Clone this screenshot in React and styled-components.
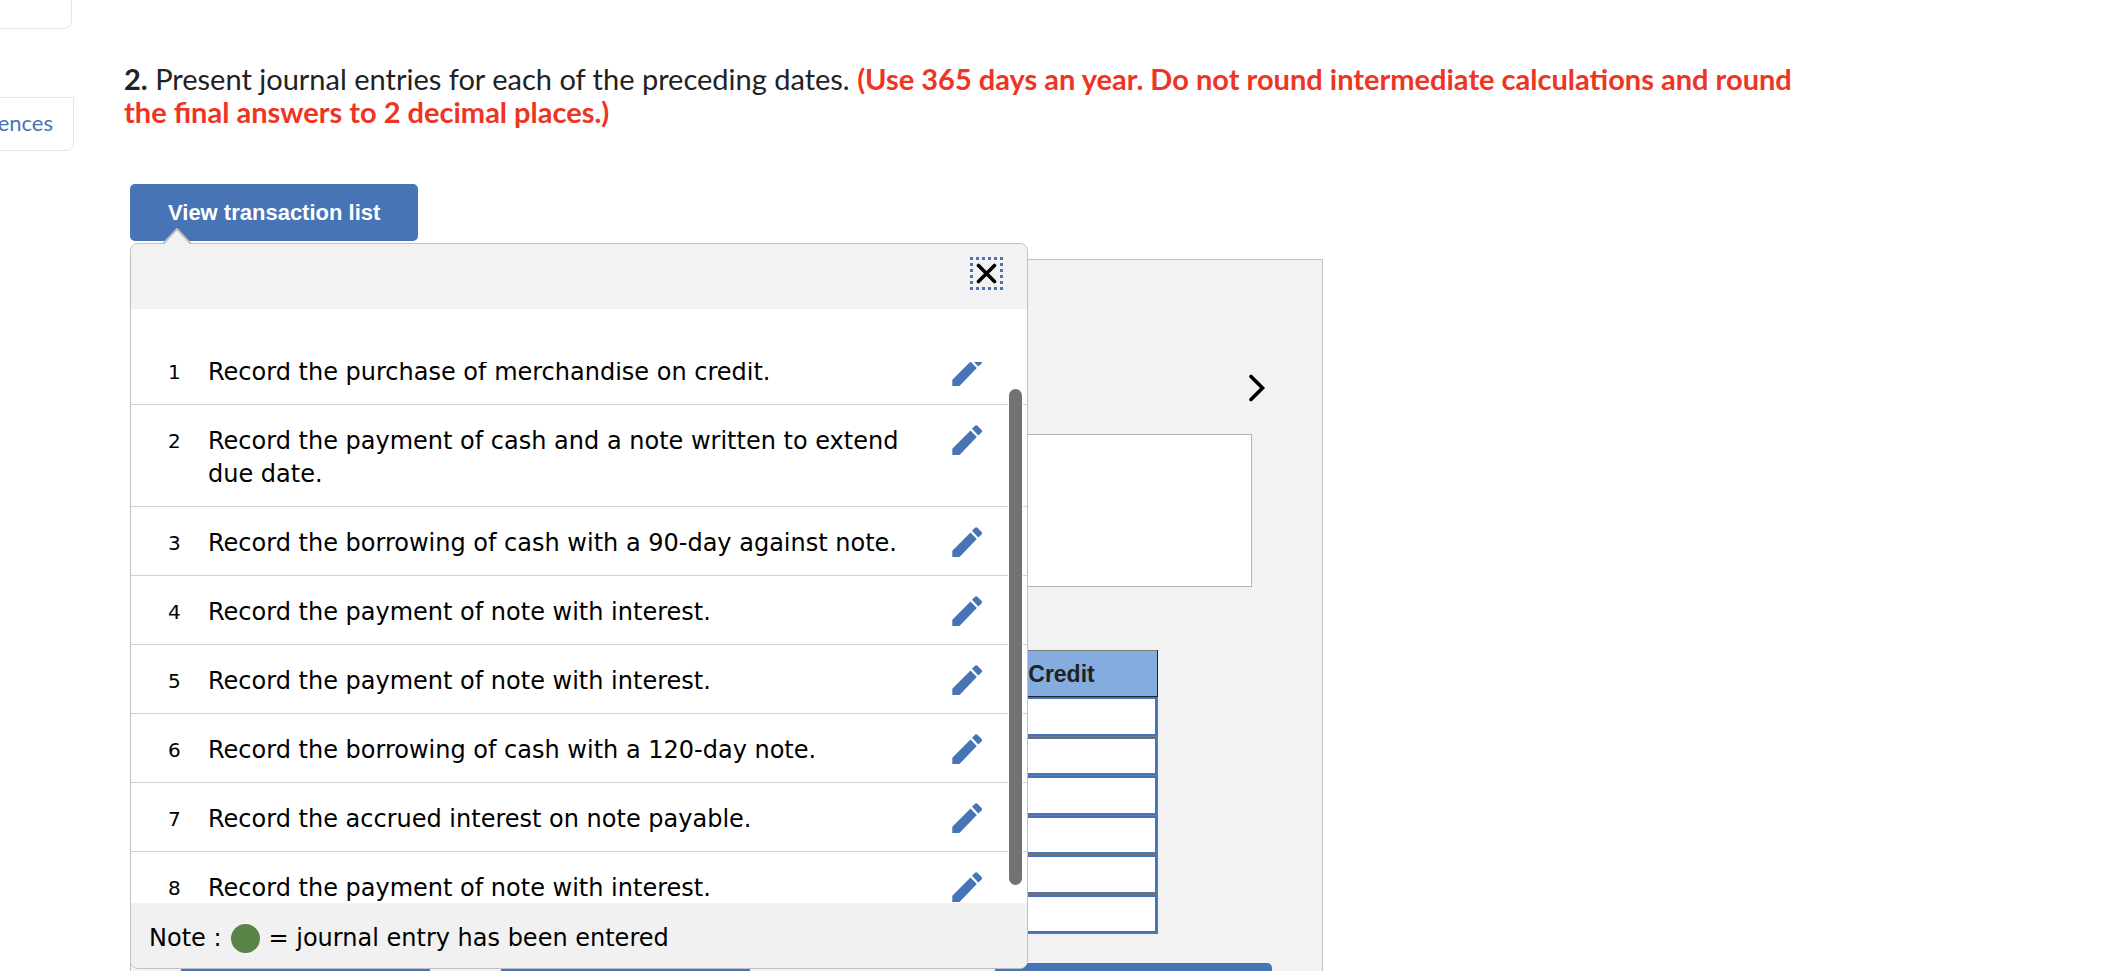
import { useLayoutEffect, useRef } from "react";
import styled, { createGlobalStyle } from "styled-components";

const transactions = [
  "Record the purchase of merchandise on credit.",
  "Record the payment of cash and a note written to extend due date.",
  "Record the borrowing of cash with a 90-day against note.",
  "Record the payment of note with interest.",
  "Record the payment of note with interest.",
  "Record the borrowing of cash with a 120-day note.",
  "Record the accrued interest on note payable.",
  "Record the payment of note with interest.",
];

const creditRows = [1, 2, 3, 4, 5, 6];

function Pencil() {
  return (
    <svg width="30" height="30" viewBox="0 0 30 30" aria-hidden="true">
      <path
        fill="#4674b5"
        d="M.3 30V23.7L18.5 5.6l6.3 6.5L7.5 30ZM20 3.8l3-3q1.2-1 2.4 0l4.2 4.2q1 1.2 0 2.4l-3.3 3.2Z"
      />
    </svg>
  );
}

function TransactionList() {
  const listRef = useRef(null);

  useLayoutEffect(() => {
    listRef.current.scrollTop = 26;
  }, []);

  return (
    <Popup>
      <Pointer width="30" height="16" viewBox="0 0 30 16" aria-hidden="true">
        <path d="M1 16 15 1l14 15" fill="#f2f2f2" stroke="#c0c0c0" strokeWidth="2" />
      </Pointer>
      <PopupHeader>
        <CloseButton type="button" aria-label="Close">
          <svg width="21" height="21" viewBox="0 0 21 21" aria-hidden="true">
            <path d="M2.5 2.5l16 16M18.5 2.5l-16 16" stroke="#000" strokeWidth="3.6" strokeLinecap="round" />
          </svg>
        </CloseButton>
      </PopupHeader>
      <ScrollArea>
        <List ref={listRef}>
          {transactions.map((text, i) => (
            <Item key={i}>
              <Number>{i + 1}</Number>
              <Description>{text}</Description>
              <EditButton type="button" aria-label={`Edit entry ${i + 1}`}>
                <Pencil />
              </EditButton>
            </Item>
          ))}
        </List>
        <Thumb />
      </ScrollArea>
      <Note>
        <span>Note :</span>
        <Dot />
        <span>= journal entry has been entered</span>
      </Note>
    </Popup>
  );
}

function App() {
  return (
    <>
      <GlobalStyle />
      <Page>
        <Sidebar>
          <SideCard />
          <SideLink href="#">ences</SideLink>
        </Sidebar>
        <Main>
          <Question>
            <b>2.</b> Present journal entries for each of the preceding dates.{" "}
            <Hint>
              (Use 365 days an year. Do not round intermediate calculations and round the final
              answers to 2 decimal places.)
            </Hint>
          </Question>
          <Workspace>
            <ViewButton type="button">View transaction list</ViewButton>
            <TransactionList />
            <Panel>
              <NextButton type="button" aria-label="Next entry">
                <svg width="18" height="28" viewBox="0 0 18 28" aria-hidden="true">
                  <path d="M3 2.5 14.5 14 3 25.5" fill="none" stroke="#000" strokeWidth="3.6" strokeLinecap="round" />
                </svg>
              </NextButton>
              <Prompt />
              <Journal>
                <thead>
                  <tr>
                    <th scope="col">Credit</th>
                  </tr>
                </thead>
                <tbody>
                  {creditRows.map((row) => (
                    <tr key={row}>
                      <td>
                        <CreditInput aria-label={`Credit ${row}`} />
                      </td>
                    </tr>
                  ))}
                </tbody>
              </Journal>
              <Actions>
                <Action type="button" aria-label="Record entry" />
                <Action type="button" aria-label="Clear entry" />
                <Action type="button" aria-label="View general journal" $wide />
              </Actions>
            </Panel>
          </Workspace>
        </Main>
      </Page>
    </>
  );
}

const GlobalStyle = createGlobalStyle`
  * {
    box-sizing: border-box;
  }
  body {
    margin: 0;
    background-color: #fff;
    overflow: hidden;
  }
  button {
    padding: 0;
    border: 0;
    background: none;
    cursor: pointer;
  }
  svg {
    display: block;
  }
`;

const Page = styled.div`
  display: flex;
  height: calc(100vh - 9px);
  overflow: hidden;
`;
const Sidebar = styled.aside`
  display: flex;
  flex-direction: column;
  align-items: flex-start;
  gap: 68px;
  width: 124px;
  flex-shrink: 0;
`;
const SideCard = styled.div`
  width: 72px;
  height: 29px;
  border: solid #e6e6e6;
  border-width: 0 1px 1px 0;
  border-bottom-right-radius: 8px;
`;
const SideLink = styled.a`
  display: flex;
  justify-content: flex-end;
  width: 74px;
  padding: 11px 20px 13px 0;
  border: solid #e6e6e6;
  border-width: 1px 1px 1px 0;
  border-bottom-right-radius: 8px;
  color: #4674b5;
  font: 22px/28px Lato, sans-serif;
  text-decoration: none;
`;
const Main = styled.main`
  flex: 1;
  padding-top: 62px;
`;
const Question = styled.p`
  max-width: 1710px;
  margin: 0;
  color: #222;
  font: 29px/33px Lato, sans-serif;
`;
const Hint = styled.strong`
  color: #ee3524;
`;
const Workspace = styled.section`
  position: relative;
  max-width: 1199px;
  padding: 56px 0 0 6px;
`;
const ViewButton = styled.button`
  display: block;
  padding: 0 38px;
  height: 57px;
  border-radius: 5px;
  background-color: #4674b5;
  color: #fff;
  font: bold 22px/57px "Liberation Sans", Arial, sans-serif;
`;
const Panel = styled.div`
  display: flex;
  flex-direction: column;
  align-items: flex-end;
  margin-top: 18px;
  border: 1px solid #c0c0c0;
  background-color: #f2f2f2;
`;
const NextButton = styled.button`
  margin: 114px 56px 0 0;
`;
const Prompt = styled.div`
  width: 90%;
  height: 153px;
  margin: 32px 70px 0 0;
  border: 1px solid #b4b4b4;
  background-color: #fff;
`;
const Journal = styled.table`
  width: 193px;
  margin: 63px 164px 0 0;
  border-collapse: collapse;

  th {
    height: 46px;
    padding: 0;
    border: 1px solid #222;
    border-top-color: #777;
    background-color: #84acdf;
    color: #222;
    font: bold 23px/44px "Liberation Sans", Arial, sans-serif;
  }
  td {
    padding: 0;
    border: 1px solid #777;
  }
  tr:nth-child(even) input {
    height: 38px;
  }
`;
const CreditInput = styled.input`
  display: block;
  width: 100%;
  height: 39px;
  padding: 0 8px;
  border: 2px solid #4674b5;
  border-radius: 0;
  background-color: #fff;
`;
const Actions = styled.div`
  display: flex;
  align-items: flex-start;
  width: 100%;
  padding: 0 50px;
  margin-top: 29px;
`;
const Action = styled.button`
  width: ${(props) => (props.$wide ? "277px" : "249px")};
  height: 57px;
  margin-right: ${(props) => (props.$wide ? "0" : "71px")};
  margin-left: ${(props) => (props.$wide ? "auto" : "0")};
  border-radius: 5px;
  background-color: #4674b5;
`;

const Popup = styled.div`
  position: absolute;
  z-index: 1;
  top: 115px;
  left: 6px;
  width: calc(75% - 1px);
  min-width: 700px;
  border: 1px solid #c0c0c0;
  border-radius: 8px;
  background-color: #fff;
  color: #000;
  font: 24px/33px "DejaVu Sans", Verdana, sans-serif;
`;
const Pointer = styled.svg`
  position: absolute;
  top: -16px;
  left: 31px;
`;
const PopupHeader = styled.div`
  display: flex;
  justify-content: flex-end;
  height: 65px;
  padding: 13px 24px 0 0;
  border-radius: 8px 8px 0 0;
  background-color: #f2f2f2;
`;
const CloseButton = styled.button`
  display: flex;
  align-items: center;
  justify-content: center;
  width: 33px;
  height: 33px;
  border: 3px dotted #4674b5;
`;
const ScrollArea = styled.div`
  position: relative;
  padding-top: 53px;
`;
const List = styled.ol`
  height: 541px;
  margin: 0;
  padding: 0;
  overflow-y: auto;
  list-style: none;
  scrollbar-width: none;
`;
const Item = styled.li`
  display: grid;
  grid-template-columns: 40px 1fr 30px;
  padding: 20px 45px 15px 37px;
  border-bottom: 1px solid #d0d0d0;
`;
const Number = styled.span`
  font-size: 20px;
`;
const Description = styled.span`
  padding-right: 22px;
`;
const EditButton = styled.button`
  align-self: start;
`;
const Thumb = styled.div`
  position: absolute;
  top: 80px;
  right: 5px;
  width: 13px;
  height: 496px;
  border-radius: 7px;
  background-color: #737171;
  box-shadow: 0 0 0 1px #fff;
`;
const Note = styled.div`
  display: flex;
  align-items: center;
  gap: 9px;
  height: 65px;
  padding: 5px 18px 0;
  border-radius: 0 0 8px 8px;
  background-color: #f1f1f1;
`;
const Dot = styled.span`
  width: 29px;
  height: 29px;
  border-radius: 50%;
  background-color: #5a8348;
`;

export default App;
